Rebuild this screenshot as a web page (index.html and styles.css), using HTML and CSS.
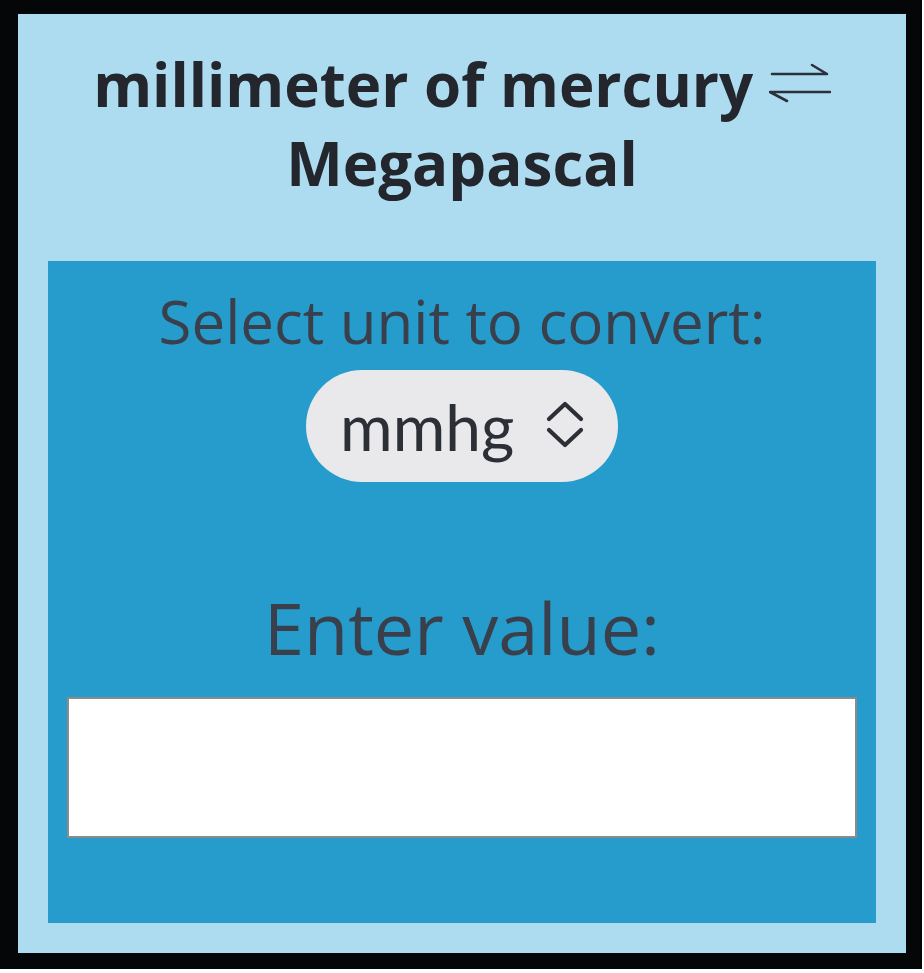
FILE: index.html
```html
<!DOCTYPE html>
<html lang="en">
<head>
    <meta charset="UTF-8">
    <meta name="viewport" content="width=device-width, initial-scale=1.0">
    <title>millimeter of mercury to Megapascal</title>
    <link rel="stylesheet" href="styles.css">
</head>
<body>

    <div class="card">
        <h1 class="title">millimeter of mercury <svg class="swap" viewBox="0 0 62 40" width="62" height="40" aria-label="⇌">
                <path d="M3 11 H58 L43 2" fill="none" stroke="#2a303c" stroke-width="2.6" stroke-linecap="round" stroke-linejoin="round"/>
                <path d="M61 29 H1 L18 38" fill="none" stroke="#2a303c" stroke-width="2.6" stroke-linecap="round" stroke-linejoin="round"/>
            </svg> Megapascal</h1>

        <div class="panel">
            <label class="label" for="unit">Select unit to convert:</label>
            <div class="select-wrap">
                <select id="unit" class="unit-select">
                    <option value="mmhg">mmhg</option>
                    <option value="mpa">mpa</option>
                </select>
                <svg class="chevrons" viewBox="0 0 44 50" width="44" height="50" aria-hidden="true">
                    <path d="M6 20 L22 5 L38 20" fill="none" stroke="#2c2f36" stroke-width="4.2" stroke-linecap="round" stroke-linejoin="round"/>
                    <path d="M6 31 L22 46 L38 31" fill="none" stroke="#2c2f36" stroke-width="4.2" stroke-linecap="round" stroke-linejoin="round"/>
                </svg>
            </div>

            <label class="label label-big" for="value">Enter value:</label>
            <input id="value" class="value-input" type="text">
        </div>
    </div>

</body>
</html>
```

FILE: styles.css
```css
body {
    margin: 0;
    background-color: #fff;
    font-family: "Open Sans", sans-serif;
}

.card {
    box-sizing: border-box;
    width: 922px;
    height: 969px;
    border: 16px solid #050608;
    border-left-width: 18px;
    border-top-width: 14px;
    background-color: #addcf0;
    display: flex;
    flex-direction: column;
}

.title {
    flex-shrink: 0;
    margin: 0;
    padding: 31px 60px 0;
    height: 247px;
    box-sizing: border-box;
    text-align: center;
    font-size: 60px;
    line-height: 79px;
    font-weight: 700;
    color: #23262d;
}

.swap {
    vertical-align: 4px;
}

.panel {
    margin: 0 30px 30px;
    flex: 1;
    background-color: #269ccc;
    display: flex;
    flex-direction: column;
    align-items: center;
    padding: 19px 20px 0;
}

.label {
    font-size: 60px;
    line-height: 82px;
    color: #393f4b;
}

.label-big {
    margin-top: 96px;
    font-size: 72px;
    line-height: 98px;
}

.select-wrap {
    position: relative;
    margin-top: 8px;
}

.unit-select {
    appearance: none;
    -webkit-appearance: none;
    display: block;
    width: 312px;
    height: 112px;
    border: none;
    border-radius: 56px;
    background-color: #e9e9ec;
    font-family: Lato, sans-serif;
    font-size: 64px;
    color: #2c2f36;
    padding: 0 0 0 34px;
    outline: none;
}

.chevrons {
    position: absolute;
    right: 31px;
    top: 29px;
    pointer-events: none;
}

.value-input {
    box-sizing: border-box;
    display: block;
    margin-top: 21px;
    width: 790px;
    height: 141px;
    border: 2px solid #8b8b8b;
    background-color: #fff;
    font-size: 48px;
    font-family: "Open Sans", sans-serif;
}
```
